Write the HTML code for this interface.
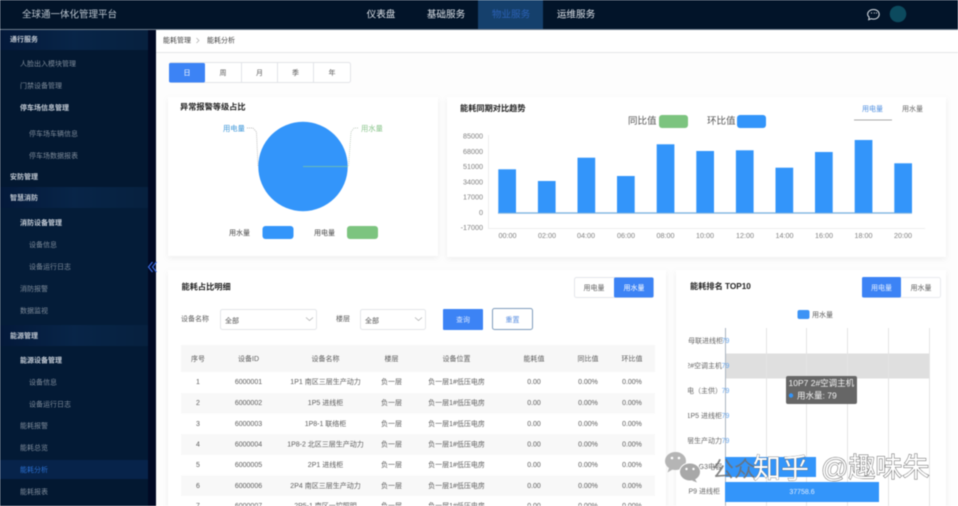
<!DOCTYPE html>
<html lang="zh-CN"><head><meta charset="utf-8"><title>全球通一体化管理平台</title>
<style>
html,body{margin:0;padding:0;width:958px;height:506px;overflow:hidden;background:#fff}
svg{display:block;filter:blur(.5px)}
text{font-family:"Liberation Sans","Noto Sans CJK SC",sans-serif;font-size:7px;fill:#5c5c5c}
.m{text-anchor:middle}.e{text-anchor:end}
.s1{fill:#c4ccd6;font-weight:700;font-size:7px}
.s2{fill:#7d8a99}
.s3{fill:#c0c8d2;font-weight:700}
.nav{font-size:9.6px;fill:#dde2e8;text-anchor:middle}
.t{font-size:8.2px;font-weight:700;fill:#222}
.ax{fill:#808080;font-size:7.2px}
</style></head><body>
<svg width="958" height="506" viewBox="0 0 958 506" xmlns="http://www.w3.org/2000/svg">
<defs>
<filter id="sh" x="-5%" y="-5%" width="110%" height="112%"><feDropShadow dx="0" dy="2" stdDeviation="3" flood-color="#000" flood-opacity=".06"/></filter>
<clipPath id="lc"><rect x="688" y="325" width="40" height="181"/></clipPath>
<linearGradient id="band" x1="0" x2="1" y1="0" y2="0"><stop offset="0" stop-color="#04193a"/><stop offset=".5" stop-color="#082548"/><stop offset="1" stop-color="#07213f"/></linearGradient>
</defs>
<rect width="958" height="506" fill="#fdfdfd"/>
<!-- header -->
<rect width="958" height="29" fill="#021429"/>
<rect y="29" width="958" height="1" fill="#6f7d8c"/>
<rect x="478" width="65" height="29" fill="#15406c"/>
<text x="22" y="17.5" style="font-size:9.5px;fill:#b9c3cd">全球通一体化管理平台</text>
<text x="381" y="17.5" class="nav">仪表盘</text>
<text x="446" y="17.5" class="nav">基础服务</text>
<text x="511" y="17.5" class="nav" style="fill:#2c61b5">物业服务</text>
<text x="576" y="17.5" class="nav">运维服务</text>
<path d="M873.5 9.5c3.300 0 5.700 2.100 5.700 4.800s-2.400 4.800-5.700 4.800c-.8 0-1.500-.1-2.200-.4l-2.600 1 .5-2.500c-1-.8-1.600-1.800-1.600-2.900 0-2.700 2.600-4.800 5.900-4.800z" fill="none" stroke="#d8dee4" stroke-width="1"/>
<path d="M871 13h1M873.800 13h1M876 13h1" stroke="#d8dee4" stroke-width="1"/>
<circle cx="898" cy="14" r="8.300" fill="#0c4a5e"/>
<!-- sidebar -->
<rect y="30" width="148" height="476" fill="#031831"/>
<rect x="148" y="30" width="8" height="476" fill="#010a24"/>
<rect y="30" width="148" height="20" fill="url(#band)"/>
<rect y="187" width="148" height="21" fill="url(#band)"/>
<rect y="208" width="148" height="118" fill="#041c38"/>
<rect y="325" width="148" height="21" fill="url(#band)"/>
<rect y="346" width="148" height="114" fill="#031a35"/>
<rect y="460" width="148" height="19" fill="#07234a"/>
<path d="M156.500 262l-4 5 4 5M152.500 262l-4 5 4 5" fill="none" stroke="#3a6ae0" stroke-width="1.200"/>
<text x="10" y="41.500" class="s3">通行服务</text>
<text x="20" y="66" class="s2">人脸出入模块管理</text>
<text x="20" y="88" class="s2">门禁设备管理</text>
<text x="20" y="110" class="s1">停车场信息管理</text>
<text x="29" y="136" class="s2">停车场车辆信息</text>
<text x="29" y="158" class="s2">停车场数据报表</text>
<text x="10" y="179" class="s3">安防管理</text>
<text x="10" y="200" class="s3">智慧消防</text>
<text x="20" y="225" class="s1">消防设备管理</text>
<text x="29" y="247" class="s2">设备信息</text>
<text x="29" y="269" class="s2">设备运行日志</text>
<text x="20" y="291" class="s2">消防报警</text>
<text x="20" y="313" class="s2">数据监视</text>
<text x="10" y="338" class="s3">能源管理</text>
<text x="20" y="362.500" class="s1">能源设备管理</text>
<text x="29" y="384.500" class="s2">设备信息</text>
<text x="29" y="406.500" class="s2">设备运行日志</text>
<text x="20" y="428" class="s2">能耗报警</text>
<text x="20" y="450" class="s2">能耗总览</text>
<text x="20" y="472" style="fill:#2a6fd0">能耗分析</text>
<text x="20" y="494" class="s2">能耗报表</text>
<!-- breadcrumb -->
<rect x="156" y="30" width="802" height="22" fill="#fff"/>
<rect x="156" y="52" width="802" height="1" fill="#e4e6e8"/>
<text x="163" y="42.500" style="fill:#444">能耗管理</text>
<path d="M196.500 38l2.500 2.500-2.500 2.500" fill="none" stroke="#aaa" stroke-width=".7"/>
<text x="207" y="42.500" style="fill:#444">能耗分析</text>
<!-- tabs -->
<rect x="169.500" y="62.500" width="181" height="20" rx="2" fill="#fff" stroke="#e2e4e8"/>
<rect x="169" y="63" width="36" height="19.500" rx="1.500" fill="#3c83f5"/>
<path d="M241.500 63v19M277.500 63v19M313.500 63v19" stroke="#e2e4e8"/>
<text x="187" y="75" class="m" style="fill:#fff">日</text>
<text x="223" y="75" class="m">周</text>
<text x="259.500" y="75" class="m">月</text>
<text x="295.500" y="75" class="m">季</text>
<text x="332" y="75" class="m">年</text>
<!-- cards -->
<rect x="168" y="97" width="270" height="159" fill="#fff" filter="url(#sh)"/>
<rect x="447" y="97" width="499" height="160" fill="#fff" filter="url(#sh)"/>
<rect x="168" y="270" width="498" height="240" fill="#fff" filter="url(#sh)"/>
<rect x="676" y="270" width="270" height="240" fill="#fff" filter="url(#sh)"/>
<!-- card 1 -->
<text x="180" y="109.500" class="t">异常报警等级占比</text>
<circle cx="303" cy="166.500" r="44.700" fill="#3395fa"/>
<path d="M303 166.500h44.700" stroke="#7cc8a0" stroke-width=".8"/>
<path d="M247 128h6l3.500 4 1.500 34.500" fill="none" stroke="#a8a8a8" stroke-width=".7" stroke-dasharray="1 1"/>
<path d="M358 128h-4l-3 4-2.500 34.500" fill="none" stroke="#b0c0b0" stroke-width=".7" stroke-dasharray="1 1"/>
<text x="223" y="131" style="fill:#3b95d8;font-size:7.300px">用电量</text>
<text x="361" y="131" style="fill:#8cc68e;font-size:7.300px">用水量</text>
<text x="229" y="235" style="fill:#444">用水量</text>
<rect x="262.500" y="226" width="31" height="13" rx="3" fill="#3395fa"/>
<text x="314" y="235" style="fill:#444">用电量</text>
<rect x="347" y="226" width="31" height="13" rx="3" fill="#7cc47f"/>
<!-- card 2 -->
<text x="460" y="111" class="t">能耗同期对比趋势</text>
<text x="628" y="124" style="font-size:9.500px;fill:#555">同比值</text>
<rect x="659" y="115" width="29" height="13" rx="3" fill="#7cc47f"/>
<text x="707" y="124" style="font-size:9.500px;fill:#555">环比值</text>
<rect x="737" y="115" width="29" height="13" rx="3" fill="#3395fa"/>
<text x="862" y="111" style="fill:#4f8fe0">用电量</text>
<text x="902" y="111" style="fill:#666">用水量</text>
<rect x="854" y="119.500" width="38" height="1" fill="#aaa"/>
<g>
<text x="483" y="138.500" class="e ax">85000</text>
<text x="483" y="153.800" class="e ax">68000</text>
<text x="483" y="169" class="e ax">51000</text>
<text x="483" y="184.500" class="e ax">34000</text>
<text x="483" y="199.700" class="e ax">17000</text>
<text x="483" y="214.800" class="e ax">0</text>
<text x="483" y="230" class="e ax">-17000</text>
<text x="507.500" y="238" class="m ax">00:00</text>
<text x="547" y="238" class="m ax">02:00</text>
<text x="586" y="238" class="m ax">04:00</text>
<text x="626" y="238" class="m ax">06:00</text>
<text x="665.500" y="238" class="m ax">08:00</text>
<text x="705" y="238" class="m ax">10:00</text>
<text x="745" y="238" class="m ax">12:00</text>
<text x="784.500" y="238" class="m ax">14:00</text>
<text x="824" y="238" class="m ax">16:00</text>
<text x="863.500" y="238" class="m ax">18:00</text>
<text x="903" y="238" class="m ax">20:00</text>
</g>
<path d="M488.500 135v93.500H925" fill="none" stroke="#eee" stroke-width="1"/>
<rect x="498" y="212.300" width="414" height="1.400" fill="#7fb5e0"/>
<g fill="#3395fa">
<rect x="498.300" y="169.300" width="17.700" height="43.400"/>
<rect x="537.900" y="181" width="17.700" height="31.700"/>
<rect x="577.500" y="157.700" width="17.700" height="55"/>
<rect x="617" y="176" width="17.700" height="36.700"/>
<rect x="656.700" y="144.300" width="17.700" height="68.400"/>
<rect x="696.300" y="151" width="17.700" height="61.700"/>
<rect x="735.900" y="150.300" width="17.700" height="62.400"/>
<rect x="775.500" y="167.700" width="17.700" height="45"/>
<rect x="815" y="152" width="17.700" height="60.700"/>
<rect x="854.700" y="140" width="17.700" height="72.700"/>
<rect x="894.300" y="163.300" width="17.700" height="49.400"/>
</g>
<!-- card 3 -->
<text x="181.500" y="289.500" class="t">能耗占比明细</text>
<rect x="574.500" y="277.500" width="79" height="20" rx="2" fill="#fff" stroke="#e4e6ea"/>
<rect x="614" y="277.500" width="39.500" height="20" rx="1.500" fill="#3c83f5"/>
<text x="594" y="290" class="m">用电量</text>
<text x="634" y="290" class="m" style="fill:#fff">用水量</text>
<text x="181" y="321">设备名称</text>
<rect x="220.500" y="309.500" width="96" height="20" rx="2" fill="#fff" stroke="#e3e5e8"/>
<text x="225" y="323" style="fill:#555">全部</text>
<path d="M306 317.500l3.500 3 3.500-3" fill="none" stroke="#aaa" stroke-width=".7"/>
<text x="336" y="321">楼层</text>
<rect x="360.500" y="309.500" width="65" height="20" rx="2" fill="#fff" stroke="#e3e5e8"/>
<text x="365" y="323" style="fill:#555">全部</text>
<path d="M415 317.500l3.500 3 3.500-3" fill="none" stroke="#aaa" stroke-width=".7"/>
<rect x="443" y="309" width="40" height="21" rx="1" fill="#3c83f5"/>
<text x="463" y="322" class="m" style="fill:#d5e5ff">查询</text>
<rect x="492.500" y="308.500" width="40" height="21" rx="2" fill="#fff" stroke="#7f9cbc"/>
<text x="512.500" y="322" class="m" style="fill:#5a8fe0">重置</text>
<rect x="181" y="345" width="474" height="27" fill="#f7f7f7"/>
<rect x="181" y="393" width="474" height="20.500" fill="#f8f8f8"/>
<rect x="181" y="434" width="474" height="21" fill="#f8f8f8"/>
<rect x="181" y="475.500" width="474" height="20.500" fill="#f8f8f8"/>
<g>
<text x="198" y="361" class="m">序号</text><text x="248.500" y="361" class="m">设备ID</text><text x="325.500" y="361" class="m">设备名称</text><text x="391.500" y="361" class="m">楼层</text><text x="456.500" y="361" class="m">设备位置</text><text x="534" y="361" class="m">能耗值</text><text x="588" y="361" class="m">同比值</text><text x="632" y="361" class="m">环比值</text>
<text x="198" y="384" class="m">1</text><text x="248.500" y="384" class="m">6000001</text><text x="325.500" y="384" class="m">1P1 南区三层生产动力</text><text x="391.500" y="384" class="m">负一层</text><text x="456.500" y="384" class="m">负一层1#低压电房</text><text x="534" y="384" class="m">0.00</text><text x="588" y="384" class="m">0.00%</text><text x="632" y="384" class="m">0.00%</text>
<text x="198" y="405" class="m">2</text><text x="248.500" y="405" class="m">6000002</text><text x="325.500" y="405" class="m">1P5 进线柜</text><text x="391.500" y="405" class="m">负一层</text><text x="456.500" y="405" class="m">负一层1#低压电房</text><text x="534" y="405" class="m">0.00</text><text x="588" y="405" class="m">0.00%</text><text x="632" y="405" class="m">0.00%</text>
<text x="198" y="426" class="m">3</text><text x="248.500" y="426" class="m">6000003</text><text x="325.500" y="426" class="m">1P8-1 联络柜</text><text x="391.500" y="426" class="m">负一层</text><text x="456.500" y="426" class="m">负一层1#低压电房</text><text x="534" y="426" class="m">0.00</text><text x="588" y="426" class="m">0.00%</text><text x="632" y="426" class="m">0.00%</text>
<text x="198" y="446.500" class="m">4</text><text x="248.500" y="446.500" class="m">6000004</text><text x="325.500" y="446.500" class="m">1P8-2 北区三层生产动力</text><text x="391.500" y="446.500" class="m">负一层</text><text x="456.500" y="446.500" class="m">负一层1#低压电房</text><text x="534" y="446.500" class="m">0.00</text><text x="588" y="446.500" class="m">0.00%</text><text x="632" y="446.500" class="m">0.00%</text>
<text x="198" y="467" class="m">5</text><text x="248.500" y="467" class="m">6000005</text><text x="325.500" y="467" class="m">2P1 进线柜</text><text x="391.500" y="467" class="m">负一层</text><text x="456.500" y="467" class="m">负一层1#低压电房</text><text x="534" y="467" class="m">0.00</text><text x="588" y="467" class="m">0.00%</text><text x="632" y="467" class="m">0.00%</text>
<text x="198" y="488" class="m">6</text><text x="248.500" y="488" class="m">6000006</text><text x="325.500" y="488" class="m">2P4 南区三层生产动力</text><text x="391.500" y="488" class="m">负一层</text><text x="456.500" y="488" class="m">负一层1#低压电房</text><text x="534" y="488" class="m">0.00</text><text x="588" y="488" class="m">0.00%</text><text x="632" y="488" class="m">0.00%</text>
<text x="198" y="508" class="m">7</text><text x="248.500" y="508" class="m">6000007</text><text x="325.500" y="508" class="m">2P5-1 南区一控照明</text><text x="391.500" y="508" class="m">负一层</text><text x="456.500" y="508" class="m">负一层1#低压电房</text><text x="534" y="508" class="m">0.00</text><text x="588" y="508" class="m">0.00%</text><text x="632" y="508" class="m">0.00%</text>
</g>
<!-- card 4 -->
<text x="690" y="289" class="t">能耗排名 TOP10</text>
<rect x="862.500" y="277.500" width="78" height="20" rx="2" fill="#fff" stroke="#e8eaee"/>
<rect x="862" y="277" width="39" height="20.500" rx="1.500" fill="#3c83f5"/>
<text x="881.500" y="290" class="m" style="fill:#e6f0ff">用电量</text>
<text x="921" y="290" class="m">用水量</text>
<rect x="797.500" y="310" width="12" height="9" rx="2" fill="#3c93f5"/>
<text x="812" y="317">用水量</text>
<rect x="725" y="353.500" width="204" height="25" fill="#dfdfdf"/>
<path d="M766.500 328v178M806.500 328v178M847.500 328v178M888.500 328v178M929.500 328v178" stroke="#e4e4e4"/>
<path d="M725.500 328v178" stroke="#aab4c0"/>
<g clip-path="url(#lc)">
<text x="723" y="343" class="e" style="fill:#666">2段母联进线柜</text>
<text x="722" y="368" class="e" style="fill:#666">2#空调主机</text>
<text x="722" y="393" class="e" style="fill:#666">配电（主供）</text>
<text x="722" y="418" class="e" style="fill:#666">1P5 进线柜</text>
<text x="722" y="443" class="e" style="fill:#666">三层生产动力</text>
<text x="720" y="493.500" class="e" style="fill:#666">1P9 进线柜</text>
</g>
<g style="text-anchor:middle">
<text x="725.500" y="343" class="m" style="fill:#6aa8ec">79</text>
<text x="725.500" y="368" class="m" style="fill:#6aa8ec">79</text>
<text x="725.500" y="393" class="m" style="fill:#6aa8ec">79</text>
<text x="725.500" y="418" class="m" style="fill:#6aa8ec">79</text>
<text x="725.500" y="443" class="m" style="fill:#6aa8ec">79</text>
</g>
<rect x="725" y="457" width="91" height="20" fill="#3395fa"/>
<rect x="725" y="482" width="154" height="20" fill="#3395fa"/>
<text x="722" y="469" class="e" style="fill:#666">G3电容</text>
<text x="802" y="494" class="m" style="fill:#dcecff">37758.6</text>
<rect x="786" y="376" width="71" height="28" rx="2" fill="#666"/>
<text x="788.500" y="386" style="font-size:8.500px;fill:#f2f2f2">10P7 2#空调主机</text>
<circle cx="791" cy="395.500" r="2.200" fill="#3395fa"/>
<text x="797" y="398.500" style="font-size:8.500px;fill:#f2f2f2">用水量: 79</text>
<!-- watermark -->
<ellipse cx="675.500" cy="461" rx="10.500" ry="9" fill="#b5b5b5"/>
<path d="M669 468l-1.500 4.500 5-3z" fill="#b5b5b5"/>
<ellipse cx="690" cy="472" rx="10.500" ry="9" fill="#a8a8a8" stroke="#fff" stroke-width="1"/>
<path d="M695 479l2 3.500-5-2z" fill="#a8a8a8"/>
<circle cx="672" cy="458" r="1.300" fill="#fff"/><circle cx="679" cy="458" r="1.300" fill="#fff"/>
<circle cx="686.500" cy="469" r="1.200" fill="#fff"/><circle cx="693.500" cy="469" r="1.200" fill="#fff"/>
<text x="712" y="477" style="font-size:22px;fill:#6f6f6f;opacity:.85">公众</text>
<text x="753" y="478" style="font-size:28px;fill:#fff;stroke:#666;stroke-width:.7;paint-order:stroke">知乎</text>
<text x="821" y="477" style="font-size:27px;fill:#fff;stroke:#666;stroke-width:1;paint-order:stroke">@趣味朱</text>
</svg>
</body></html>
